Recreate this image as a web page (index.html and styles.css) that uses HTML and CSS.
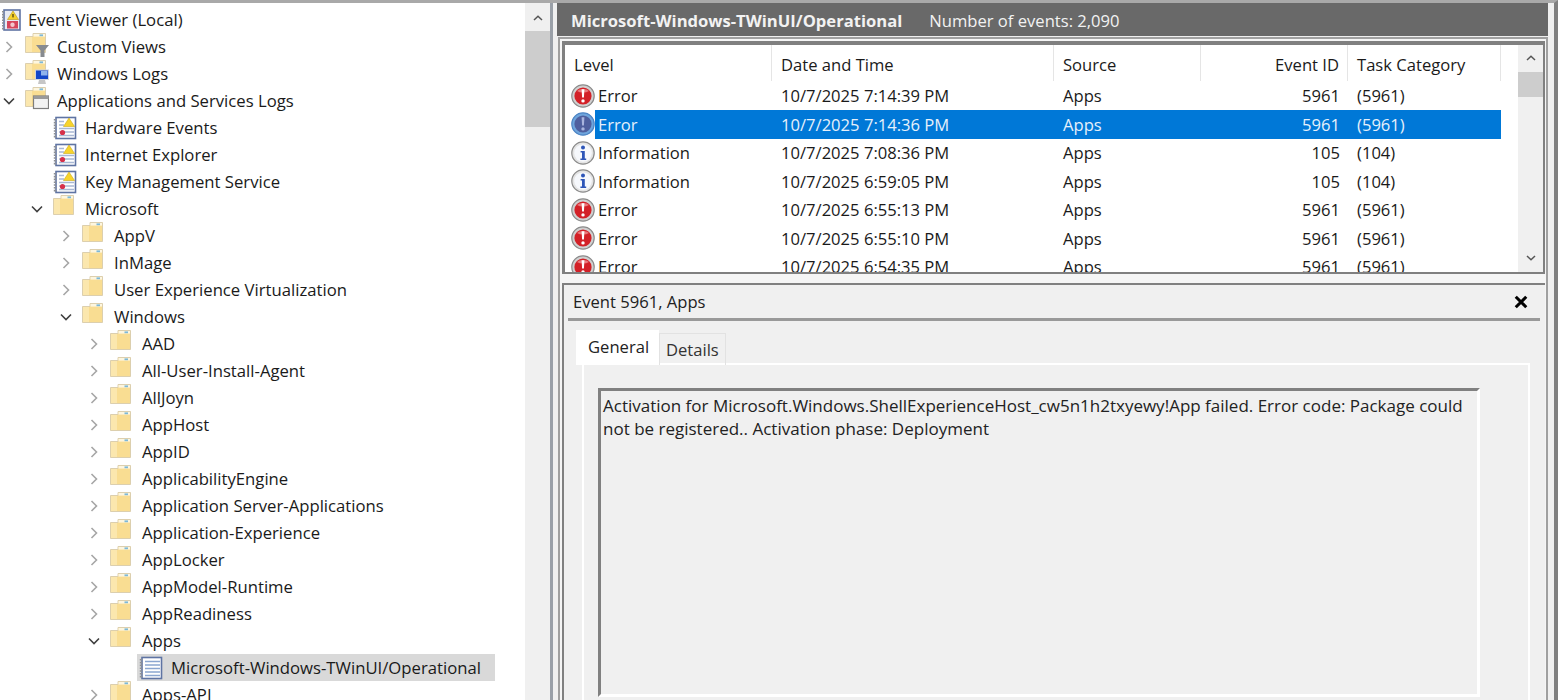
FILE: index.html
```html
<!DOCTYPE html>
<html lang="en">
<head>
<meta charset="utf-8">
<title>Event Viewer</title>
<link rel="stylesheet" href="styles.css">
</head>
<body>
<svg class="defs" width="0" height="0" aria-hidden="true">
  <defs>
    <symbol id="chev-r" viewBox="0 0 10 14"><path d="M2.5 2 L7.5 7 L2.5 12" fill="none" stroke="#a6a6a6" stroke-width="1.6"/></symbol>
    <symbol id="chev-d" viewBox="0 0 14 10"><path d="M2 2.5 L7 7.5 L12 2.5" fill="none" stroke="#404040" stroke-width="1.6"/></symbol>
    <symbol id="folder" viewBox="0 0 24 24">
      <path d="M0.5 3.5 H8 V0.5 H20.5 V19.5 H0.5 Z" fill="#f9dd92" stroke="#dccfae"/>
      <path d="M8.5 1 H20 V3.6 H8.5 Z" fill="#fdf6e0"/>
      <rect x="14.5" y="1.4" width="3.5" height="1.8" fill="#7db8d8"/>
      <path d="M1 4 H7 V19 H1 Z" fill="#fbe7ae"/>
    </symbol>
    <symbol id="log" viewBox="0 0 24 24">
      <rect x="3" y="1.5" width="19.5" height="21" fill="#fff" stroke="#5f74a3" stroke-width="1.6"/>
      <path d="M2 3V22" stroke="#8c8f96" stroke-width="2.4" stroke-dasharray="1.6 1.2"/>
      <path d="M6 5.5H21M6 9H21M6 12.5H21M6 16H21M6 19.5H21" stroke="#8ba6d0" stroke-width="1.7"/>
    </symbol>
    <symbol id="logwarn" viewBox="0 0 24 24">
      <rect x="3" y="1.5" width="19.5" height="21" fill="#fff" stroke="#5f74a3" stroke-width="1.6"/>
      <path d="M2 3V22" stroke="#8c8f96" stroke-width="2.4" stroke-dasharray="1.6 1.2"/>
      <path d="M6 12.5H21M6 16H21M6 19.5H21M6 5.5H11M6 9H11" stroke="#a9b8d4" stroke-width="1.4"/>
      <path d="M16 2 L21.5 10.5 H10.5 Z" fill="#f8d42c" stroke="#c9a917" stroke-width=".6"/>
      <circle cx="9.5" cy="16.5" r="2.6" fill="#d6304a"/>
    </symbol>
    <symbol id="err" viewBox="0 0 24 24">
      <circle cx="12" cy="12" r="11.2" fill="#d0d0d0" stroke="#8b8b8b" stroke-width="1.2"/>
      <circle cx="12" cy="12" r="8.6" fill="#d32027"/>
      <path d="M6 7 A7 4 0 0 1 18 7 A9 6 0 0 1 6 7" fill="#e97a7d"/>
      <path d="M10.6 5.2 H13.4 L12.9 13.6 H11.1 Z" fill="#fff"/>
      <circle cx="12" cy="16.9" r="1.7" fill="#fff"/>
    </symbol>
    <symbol id="err-sel" viewBox="0 0 24 24">
      <circle cx="12" cy="12" r="11.2" fill="#6fa5dc" stroke="#4c84c4" stroke-width="1.2"/>
      <circle cx="12" cy="12" r="8.6" fill="#4f5f9e"/>
      <path d="M10.6 5.2 H13.4 L12.9 13.6 H11.1 Z" fill="#a9b4de"/>
      <circle cx="12" cy="16.9" r="1.7" fill="#a9b4de"/>
    </symbol>
    <symbol id="info" viewBox="0 0 24 24">
      <circle cx="12" cy="12" r="11.2" fill="#e4e4e4" stroke="#8b8b8b" stroke-width="1.2"/>
      <circle cx="12" cy="12" r="8.8" fill="#f6f8fc"/>
      <circle cx="12" cy="6.6" r="2" fill="#2d55b8"/>
      <path d="M9.6 10 H13.8 V17.4 H15.2 V19 H9.4 V17.4 H11 V11.6 H9.6 Z" fill="#2d55b8"/>
    </symbol>
  </defs>
</svg>

<div class="window">
  <aside class="tree-pane">
    <nav class="tree">
      <div class="row lvl-root">
        <svg class="icon-root" aria-hidden="true" viewBox="0 0 19 22">
          <rect x="2" y="1" width="16" height="20" fill="#e8ebf3" stroke="#5f74a3" stroke-width="1.6"/>
          <path d="M1 2V21" stroke="#8c8f96" stroke-width="2" stroke-dasharray="1.6 1.2"/>
          <path d="M11 2 L16.5 10.5 H5.5 Z" fill="#f6d22c" stroke="#b9981a" stroke-width=".6"/>
          <rect x="10.3" y="5" width="1.4" height="3.4" fill="#5b4a10"/>
          <rect x="5" y="12" width="11" height="7.5" fill="#d6455c"/><circle cx="10.5" cy="15.8" r="2.2" fill="#f4c6cc"/>
        </svg>
        <span>Event Viewer (Local)</span>
      </div>
      <div class="row lvl-0">
        <svg class="tw tw-r" aria-hidden="true"><use href="#chev-r"/></svg>
        <svg class="icon up" aria-hidden="true" viewBox="0 0 24 24"><use href="#folder"/><path d="M11 12 H24 L19.5 17.5 V24 H15.5 V17.5 Z" fill="#878b90"/></svg>
        <span>Custom Views</span>
      </div>
      <div class="row lvl-0">
        <svg class="tw tw-r" aria-hidden="true"><use href="#chev-r"/></svg>
        <svg class="icon up" aria-hidden="true" viewBox="0 0 24 24"><use href="#folder"/><rect x="10.5" y="10" width="13" height="9.5" fill="#1347c8" stroke="#cfd4dc"/><rect x="16" y="11" width="6.5" height="4.5" fill="#8fb4ec"/><path d="M13 24 H21 L20 20 H14 Z" fill="#c6c6c6"/></svg>
        <span>Windows Logs</span>
      </div>
      <div class="row lvl-0">
        <svg class="tw tw-d" aria-hidden="true"><use href="#chev-d"/></svg>
        <svg class="icon up" aria-hidden="true" viewBox="0 0 24 24"><use href="#folder"/><rect x="8.5" y="9" width="15" height="12.5" fill="#f2f2f2" stroke="#7d7d7d" stroke-width="1.2"/><rect x="8.5" y="9" width="15" height="3" fill="#9a9a9a"/></svg>
        <span>Applications and Services Logs</span>
      </div>
      <div class="row lvl-1 no-tw"><svg class="icon" aria-hidden="true"><use href="#logwarn"/></svg><span>Hardware Events</span></div>
      <div class="row lvl-1 no-tw"><svg class="icon" aria-hidden="true"><use href="#logwarn"/></svg><span>Internet Explorer</span></div>
      <div class="row lvl-1 no-tw"><svg class="icon" aria-hidden="true"><use href="#logwarn"/></svg><span>Key Management Service</span></div>
      <div class="row lvl-1"><svg class="tw tw-d" aria-hidden="true"><use href="#chev-d"/></svg><svg class="icon up" aria-hidden="true"><use href="#folder"/></svg><span>Microsoft</span></div>
      <div class="row lvl-2"><svg class="tw tw-r" aria-hidden="true"><use href="#chev-r"/></svg><svg class="icon up" aria-hidden="true"><use href="#folder"/></svg><span>AppV</span></div>
      <div class="row lvl-2"><svg class="tw tw-r" aria-hidden="true"><use href="#chev-r"/></svg><svg class="icon up" aria-hidden="true"><use href="#folder"/></svg><span>InMage</span></div>
      <div class="row lvl-2"><svg class="tw tw-r" aria-hidden="true"><use href="#chev-r"/></svg><svg class="icon up" aria-hidden="true"><use href="#folder"/></svg><span>User Experience Virtualization</span></div>
      <div class="row lvl-2"><svg class="tw tw-d" aria-hidden="true"><use href="#chev-d"/></svg><svg class="icon up" aria-hidden="true"><use href="#folder"/></svg><span>Windows</span></div>
      <div class="row lvl-3"><svg class="tw tw-r" aria-hidden="true"><use href="#chev-r"/></svg><svg class="icon up" aria-hidden="true"><use href="#folder"/></svg><span>AAD</span></div>
      <div class="row lvl-3"><svg class="tw tw-r" aria-hidden="true"><use href="#chev-r"/></svg><svg class="icon up" aria-hidden="true"><use href="#folder"/></svg><span>All-User-Install-Agent</span></div>
      <div class="row lvl-3"><svg class="tw tw-r" aria-hidden="true"><use href="#chev-r"/></svg><svg class="icon up" aria-hidden="true"><use href="#folder"/></svg><span>AllJoyn</span></div>
      <div class="row lvl-3"><svg class="tw tw-r" aria-hidden="true"><use href="#chev-r"/></svg><svg class="icon up" aria-hidden="true"><use href="#folder"/></svg><span>AppHost</span></div>
      <div class="row lvl-3"><svg class="tw tw-r" aria-hidden="true"><use href="#chev-r"/></svg><svg class="icon up" aria-hidden="true"><use href="#folder"/></svg><span>AppID</span></div>
      <div class="row lvl-3"><svg class="tw tw-r" aria-hidden="true"><use href="#chev-r"/></svg><svg class="icon up" aria-hidden="true"><use href="#folder"/></svg><span>ApplicabilityEngine</span></div>
      <div class="row lvl-3"><svg class="tw tw-r" aria-hidden="true"><use href="#chev-r"/></svg><svg class="icon up" aria-hidden="true"><use href="#folder"/></svg><span>Application Server-Applications</span></div>
      <div class="row lvl-3"><svg class="tw tw-r" aria-hidden="true"><use href="#chev-r"/></svg><svg class="icon up" aria-hidden="true"><use href="#folder"/></svg><span>Application-Experience</span></div>
      <div class="row lvl-3"><svg class="tw tw-r" aria-hidden="true"><use href="#chev-r"/></svg><svg class="icon up" aria-hidden="true"><use href="#folder"/></svg><span>AppLocker</span></div>
      <div class="row lvl-3"><svg class="tw tw-r" aria-hidden="true"><use href="#chev-r"/></svg><svg class="icon up" aria-hidden="true"><use href="#folder"/></svg><span>AppModel-Runtime</span></div>
      <div class="row lvl-3"><svg class="tw tw-r" aria-hidden="true"><use href="#chev-r"/></svg><svg class="icon up" aria-hidden="true"><use href="#folder"/></svg><span>AppReadiness</span></div>
      <div class="row lvl-3"><svg class="tw tw-d" aria-hidden="true"><use href="#chev-d"/></svg><svg class="icon up" aria-hidden="true"><use href="#folder"/></svg><span>Apps</span></div>
      <div class="row lvl-4"><svg class="icon" aria-hidden="true"><use href="#log"/></svg><span>Microsoft-Windows-TWinUI/Operational</span></div>
      <div class="row lvl-3"><svg class="tw tw-r" aria-hidden="true"><use href="#chev-r"/></svg><svg class="icon up" aria-hidden="true"><use href="#folder"/></svg><span>Apps-API</span></div>
    </nav>
    <div class="vscroll tree-scroll">
      <svg class="arrow" viewBox="0 0 10 6" aria-hidden="true"><path d="M1 5 L5 1.2 L9 5" fill="none" stroke="#555" stroke-width="1.5"/></svg>
      <div class="thumb"></div>
    </div>
  </aside>

  <main class="right">
    <header class="banner">
      <strong>Microsoft-Windows-TWinUI/Operational</strong>
      <span>Number of events: 2,090</span>
    </header>

    <div class="panes">
      <section class="list-frame">
        <div class="list">
          <div class="cols heads">
            <div class="c c-level">Level</div>
            <div class="c c-date">Date and Time</div>
            <div class="c c-src">Source</div>
            <div class="c c-id">Event ID</div>
            <div class="c c-task">Task Category</div>
          </div>
          <div class="cols ev"><svg class="lv-icon" aria-hidden="true"><use href="#err"/></svg><div class="cell sel-l">Error</div><div class="cell c-date">10/7/2025 7:14:39 PM</div><div class="cell c-src">Apps</div><div class="cell c-id">5961</div><div class="cell c-task">(5961)</div></div>
          <div class="cols ev selected"><svg class="lv-icon" aria-hidden="true"><use href="#err-sel"/></svg><div class="cell sel-l">Error</div><div class="cell c-date">10/7/2025 7:14:36 PM</div><div class="cell c-src">Apps</div><div class="cell c-id">5961</div><div class="cell c-task">(5961)</div></div>
          <div class="cols ev"><svg class="lv-icon" aria-hidden="true"><use href="#info"/></svg><div class="cell sel-l">Information</div><div class="cell c-date">10/7/2025 7:08:36 PM</div><div class="cell c-src">Apps</div><div class="cell c-id">105</div><div class="cell c-task">(104)</div></div>
          <div class="cols ev"><svg class="lv-icon" aria-hidden="true"><use href="#info"/></svg><div class="cell sel-l">Information</div><div class="cell c-date">10/7/2025 6:59:05 PM</div><div class="cell c-src">Apps</div><div class="cell c-id">105</div><div class="cell c-task">(104)</div></div>
          <div class="cols ev"><svg class="lv-icon" aria-hidden="true"><use href="#err"/></svg><div class="cell sel-l">Error</div><div class="cell c-date">10/7/2025 6:55:13 PM</div><div class="cell c-src">Apps</div><div class="cell c-id">5961</div><div class="cell c-task">(5961)</div></div>
          <div class="cols ev"><svg class="lv-icon" aria-hidden="true"><use href="#err"/></svg><div class="cell sel-l">Error</div><div class="cell c-date">10/7/2025 6:55:10 PM</div><div class="cell c-src">Apps</div><div class="cell c-id">5961</div><div class="cell c-task">(5961)</div></div>
          <div class="cols ev"><svg class="lv-icon" aria-hidden="true"><use href="#err"/></svg><div class="cell sel-l">Error</div><div class="cell c-date">10/7/2025 6:54:35 PM</div><div class="cell c-src">Apps</div><div class="cell c-id">5961</div><div class="cell c-task">(5961)</div></div>
        </div>
        <div class="vscroll list-scroll">
          <svg class="arrow" viewBox="0 0 10 6" aria-hidden="true"><path d="M1 5 L5 1.2 L9 5" fill="none" stroke="#555" stroke-width="1.5"/></svg>
          <div class="thumb"></div>
          <svg class="arrow arrow-down" viewBox="0 0 10 6" aria-hidden="true"><path d="M1 1 L5 4.8 L9 1" fill="none" stroke="#555" stroke-width="1.5"/></svg>
        </div>
      </section>

      <section class="detail">
        <div class="detail-head">
          <span>Event 5961, Apps</span>
          <svg class="close" viewBox="0 0 12 12" aria-hidden="true"><path d="M1.5 1.5 L10.5 10.5 M10.5 1.5 L1.5 10.5" stroke="#000" stroke-width="2.6"/></svg>
        </div>
        <div class="tabs">
          <div class="tab active">General</div>
          <div class="tab">Details</div>
        </div>
        <div class="tab-body">
          <div class="message">Activation for Microsoft.Windows.ShellExperienceHost_cw5n1h2txyewy!App failed. Error code: Package could not be registered.. Activation phase: Deployment</div>
        </div>
      </section>
    </div>
  </main>
</div>
</body>
</html>
```

FILE: styles.css
```css
* { box-sizing: border-box; }
html, body { margin: 0; height: 100%; }
body {
  overflow: hidden;
  background: #f0f0f0;
  font-family: "Open Sans", "Noto Sans", "Liberation Sans", sans-serif;
  font-size: 16.6px;
  color: #1a1a1a;
}
.defs { display: block; height: 0; }
.window {
  display: flex;
  height: 700px;
  border-top: 3px solid #a9a9a9;
  border-right: 4px solid #808080;
  overflow: hidden;
}

/* tree */
.tree-pane {
  flex: 0 0 553px;
  display: flex;
  height: 697px;
  background: #fff;
  border-right: 3px solid #9aa0a8;
  overflow: hidden;
}
.tree { flex: 1; padding-top: 3px; height: 720px; font-size: 16.7px; }
.row { display: flex; align-items: center; height: 27px; white-space: nowrap; }
.lvl-root { padding-left: 1px; }
.lvl-0 { padding-left: 1px; }
.lvl-1 { padding-left: 29px; }
.lvl-2 { padding-left: 58px; }
.lvl-3 { padding-left: 86px; }
.lvl-4 { margin-left: 137px; padding-left: 2px; width: 358px; background: #d9d9d9; }
.no-tw { margin-left: 24px; }
.tw { flex: 0 0 auto; }
.tw-r { width: 10px; height: 14px; margin: 0 11px 0 3px; }
.tw-d { width: 14px; height: 10px; margin: 0 9px 0 1px; }
.icon { width: 24px; height: 24px; flex: 0 0 auto; margin-right: 8px; }
.icon.up { margin-top: -4px; }
.icon-root { width: 19px; height: 22px; flex: 0 0 auto; margin: 0 7px 0 1px; }

/* scrollbars */
.vscroll { background: #f0f0f0; display: flex; flex-direction: column; align-items: center; }
.tree-scroll { flex: 0 0 25px; }
.arrow { width: 10px; height: 6px; margin: 12px 0 10px; flex: 0 0 auto; }
.thumb { background: #cdcdcd; align-self: stretch; }
.tree-scroll .thumb { height: 96px; }
.list-scroll { flex: 0 0 25px; }
.list-scroll .thumb { height: 25px; }
.list-scroll .arrow { margin: 10px 0 11px; }
.list-scroll .arrow-down { margin: auto 0 11px; }

/* right */
.right { flex: 1; min-width: 0; padding: 0 6px 0 4px; display: flex; flex-direction: column; background: #f0f0f0; }
.banner {
  height: 33px;
  flex: 0 0 auto;
  background: #696969;
  color: #f2f2f2;
  display: flex;
  align-items: center;
  padding: 2px 0 0 14px;
  gap: 27px;
}
.banner strong { font-weight: 700; }
.panes {
  flex: 1;
  min-height: 0;
  margin: 1px 0 0 1px;
  padding: 2px 1px 0 2px;
  border: 2px solid #a0a0a0;
  border-bottom: 0;
  background: #f5f5f5;
  display: flex;
  flex-direction: column;
}
.list-frame {
  flex: 0 0 auto;
  height: 233px;
  display: flex;
  border: 2px solid #808080;
  border-top-width: 4px;
  border-left-width: 3px;
  background: #fff;
  overflow: hidden;
}
.list { flex: 0 0 953px; }
.cols { display: flex; align-items: center; white-space: nowrap; width: 936px; }
.heads { height: 36.5px; }
.c { height: 36px; line-height: 40px; border-right: 1px solid #e5e5e5; padding-left: 9px; align-self: flex-start; }
.c-level { width: 207px; }
.c-date { width: 282px; }
.c-src { width: 147px; }
.c-id { width: 147px; text-align: right; padding: 0 8px 0 0; }
.c-task { width: 153px; }
.ev { height: 28.5px; }
.lv-icon { width: 24px; height: 24px; margin-left: 6px; flex: 0 0 auto; }
.cell { height: 100%; display: flex; align-items: center; }
.cell.c-date, .cell.c-src, .cell.c-task { padding-left: 9px; }
.ev .sel-l { width: 177px; padding-left: 3px; }
.ev .c-id { justify-content: flex-end; }
.selected { background: linear-gradient(to right, #fff 30px, #0078d7 30px); color: #e6f0fb; }

/* detail */
.detail {
  flex: 1;
  margin-top: 9px;
  padding: 0 5px 0 4px;
  background: #f0f0f0;
  border-top: 2px solid #808080;
  border-left: 2px solid #808080;
  display: flex;
  flex-direction: column;
  min-height: 0;
}
.detail-head {
  height: 36px;
  flex: 0 0 auto;
  border-bottom: 3px solid #999;
  display: flex;
  align-items: center;
  justify-content: space-between;
  padding: 0 12px 0 5px;
  color: #222;
}
.close { width: 14px; height: 14px; }
.tabs { display: flex; align-items: flex-end; padding-left: 8px; margin-top: 9px; height: 35px; flex: 0 0 auto; position: relative; z-index: 1; }
.tab { height: 32px; padding: 0 6px; line-height: 32px; color: #333; border: 1px solid #e2e2e2; border-bottom: 0; }
.tab.active { height: 35px; width: 83px; line-height: 34px; background: #fff; border: 0; padding: 0 12px; color: #222; }
.tab-body {
  flex: 1;
  margin: -2px 10px 0 14px;
  padding: 23px 48px 0 14px;
  background: #f0f0f0;
  border: 2px solid #fff;
  border-bottom: 0;
  min-height: 0;
}
.message {
  height: 309px;
  padding: 3px 2px;
  border-top: 3px solid #808080;
  border-left: 3px solid #808080;
  border-right: 3px solid #fff;
  border-bottom: 3px solid #fff;
  font-size: 17px;
  line-height: 23px;
  color: #222;
}
```
